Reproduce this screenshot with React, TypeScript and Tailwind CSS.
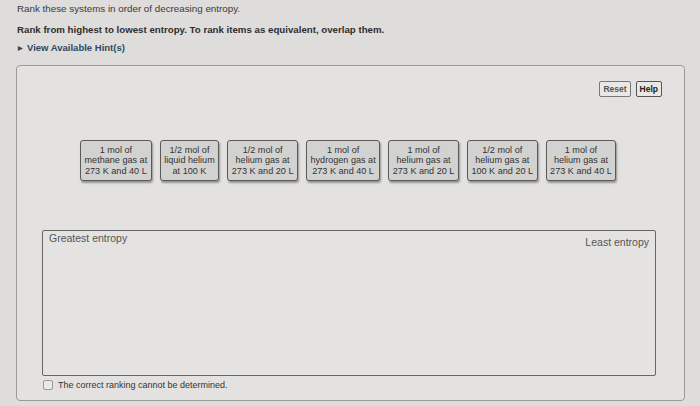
import React from "react";

const items = [
  ["1 mol of", "methane gas at", "273 K and 40 L"],
  ["1/2 mol of", "liquid helium", "at 100 K"],
  ["1/2 mol of", "helium gas at", "273 K and 20 L"],
  ["1 mol of", "hydrogen gas at", "273 K and 40 L"],
  ["1 mol of", "helium gas at", "273 K and 20 L"],
  ["1/2 mol of", "helium gas at", "100 K and 20 L"],
  ["1 mol of", "helium gas at", "273 K and 40 L"],
];

export default function App() {
  return (
    <div
      className="w-[700px] h-[406px] overflow-hidden bg-[#dedddb] text-[#333] pt-[3px]"
      style={{ fontFamily: '"Liberation Sans", Arial, sans-serif' }}
    >
      <div className="pl-[17px] text-[9.8px] leading-[12px] text-[#3a3a3a]">
        Rank these systems in order of decreasing entropy.
      </div>
      <div className="pl-[17px] mt-[9px] text-[9.7px] leading-[12px] font-bold text-[#2e2e2e]">
        Rank from highest to lowest entropy. To rank items as equivalent, overlap them.
      </div>
      <div className="pl-[18px] mt-[6px] flex items-center gap-[4px] text-[9.5px] leading-[12px] font-bold text-[#2f4a63]">
        <span className="text-[6px] text-[#444]">▶</span>
        <span>View Available Hint(s)</span>
      </div>
      <div className="ml-[16px] mt-[11px] w-[669px] h-[336px] rounded-[4px] border border-[#9a9a98] bg-[#e3e2e0] flex flex-col">
        <div className="flex justify-end gap-[5px] pr-[22px] pt-[15px]">
          <div className="h-[16px] px-[3px] flex items-center rounded-[2px] border border-[#777] bg-[#e8e8e6] text-[8.5px] font-bold text-[#555]">
            Reset
          </div>
          <div className="h-[16px] px-[3px] flex items-center rounded-[2px] border border-[#555] bg-[#e8e8e6] text-[8.5px] font-bold text-[#222]">
            Help
          </div>
        </div>
        <div className="flex pl-[63px] gap-[8px] mt-[43px]">
          {items.map((it, i) => (
            <div
              key={i}
              className="h-[41px] px-[3.5px] rounded-[3px] border border-[#5a5a5a] bg-[#d2d2d1] shadow-[1px_2px_2px_rgba(0,0,0,0.35)] flex flex-col items-center justify-center text-[9.1px] leading-[10.5px] text-[#333]"
            >
              {it.map((l, j) => (
                <div key={j} className="whitespace-nowrap">{l}</div>
              ))}
            </div>
          ))}
        </div>
        <div className="ml-[25px] mt-[49px] w-[614px] h-[146px] rounded-[2px] border border-[#666] bg-[#e4e3e1] flex justify-between pl-[6px] pr-[6px] pt-[1px] text-[10.5px] leading-[13px] text-[#555]">
          <span>Greatest entropy</span>
          <span className="mt-[4px]">Least entropy</span>
        </div>
        <div className="ml-[26px] mt-[3px] flex items-center gap-[5px] text-[9px] leading-[12px] text-[#333]">
          <div className="w-[10px] h-[10px] rounded-[2px] border border-[#999] bg-[#e8e8e6]" />
          <span>The correct ranking cannot be determined.</span>
        </div>
      </div>
    </div>
  );
}
